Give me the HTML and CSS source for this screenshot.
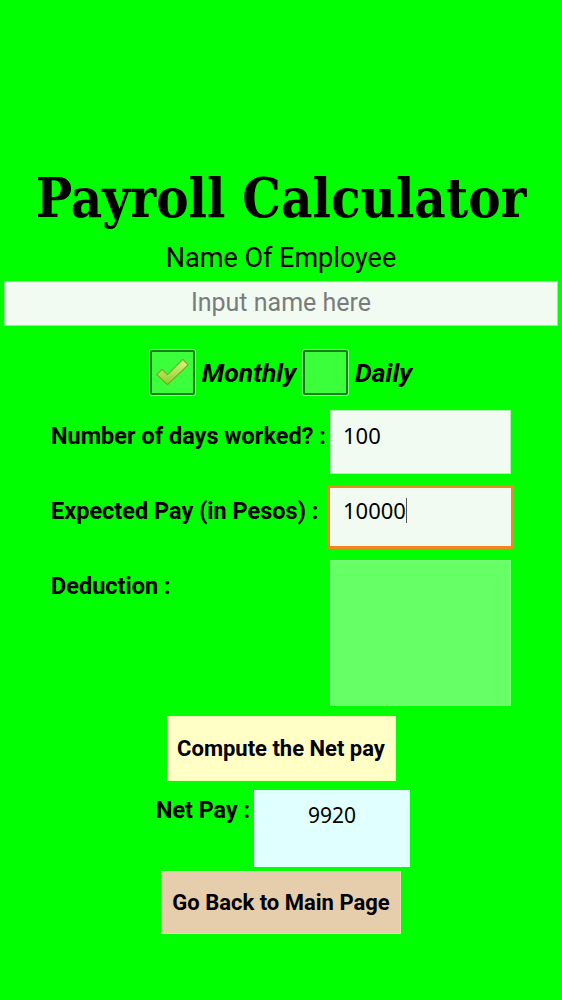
FILE: index.html
```html
<!DOCTYPE html>
<html lang="en">
<head>
<meta charset="utf-8">
<title>Payroll Calculator</title>
<link rel="stylesheet" href="styles.css">
</head>
<body>
<div class="screen">
  <h1 class="title">Payroll Calculator</h1>
  <p class="name-label">Name Of Employee</p>
  <div class="name-input">Input name here</div>
  <div class="choices">
    <span class="check">
      <svg viewBox="0 0 40 40" width="36" height="36">
        <defs>
          <linearGradient id="ck" x1="0" y1="0" x2="0" y2="1">
            <stop offset="0" stop-color="#dcf77e"/>
            <stop offset="1" stop-color="#8ccc2c"/>
          </linearGradient>
        </defs>
        <path d="M3 23 L9 17 L15 23 L32 6 L38 12 L15 34 Z" fill="url(#ck)" stroke="#6ea82c" stroke-width="1.2" stroke-linejoin="round"/>
      </svg>
    </span>
    <span class="choice-label">Monthly</span>
    <span class="check"></span>
    <span class="choice-label">Daily</span>
  </div>
  <div class="form">
    <div class="label">Number of days worked? :</div>
    <div class="field">100</div>
    <div class="label">Expected Pay (in Pesos) :</div>
    <div class="field focused">10000<span class="caret"></span></div>
    <div class="label">Deduction :</div>
    <div class="field deduction"></div>
  </div>
  <div class="actions">
    <div class="btn compute">Compute the Net pay</div>
    <div class="net-row">
      <span class="net-label">Net Pay :</span>
      <div class="net-box">9920</div>
    </div>
    <div class="btn back">Go Back to Main Page</div>
  </div>
</div>
</body>
</html>
```
FILE: styles.css
```css
body {
  margin: 0;
  background: #00ff00;
  font-family: Roboto, "Noto Sans", sans-serif;
  color: #000;
}

.screen {
  width: 562px;
  min-height: 1000px;
  padding-top: 166px;
  box-sizing: border-box;
}

.title {
  margin: 0;
  text-align: center;
  font-family: "DejaVu Serif", serif;
  font-stretch: condensed;
  font-weight: bold;
  font-size: 54px;
  line-height: 64px;
}

.name-label {
  margin: 12px 0 7px;
  text-align: center;
  font-size: 27px;
  line-height: 32px;
}

.name-input {
  margin: 0 4px;
  height: 45px;
  box-sizing: border-box;
  border: 1px solid #9be89b;
  background: #f1fbf1;
  color: #7b7b7b;
  font-size: 25px;
  line-height: 41px;
  text-align: center;
}

.choices {
  display: flex;
  justify-content: center;
  align-items: center;
  gap: 7px;
  margin-top: 23px;
  height: 46px;
}

.check {
  width: 45px;
  height: 45px;
  box-sizing: border-box;
  border: 2px solid #1d7a1d;
  background: #3aff3a;
  box-shadow: 0 0 0 1px #7dff7d;
  border-radius: 2px;
  display: flex;
  align-items: center;
  justify-content: center;
}

.choice-label {
  font-weight: bold;
  font-style: italic;
  font-size: 26.5px;
}

.form {
  display: grid;
  grid-template-columns: 279px 181px;
  grid-template-rows: 64px 64px 146px;
  row-gap: 11px;
  margin: 15px 0 0 51px;
}

.label {
  font-weight: bold;
  font-size: 23.5px;
  line-height: 26px;
  padding-top: 13px;
  white-space: nowrap;
}

.field {
  box-sizing: border-box;
  background: #f1fbf1;
  border: 1px solid #b5ecb5;
  font-family: "Noto Sans", sans-serif;
  font-size: 22px;
  line-height: 26px;
  padding: 11px 12px;
}

.field.focused {
  border: 3px solid #f0861c;
  border-radius: 2px;
  margin: 0 -3px;
  padding: 9px 13px;
}

.caret {
  display: inline-block;
  width: 1px;
  height: 25px;
  background: #555;
  vertical-align: -4px;
}

.field.deduction {
  background: #66ff66;
  border-color: #7cff7c;
}

.actions {
  display: flex;
  flex-direction: column;
  align-items: center;
  margin-top: 10px;
}

.btn {
  display: flex;
  align-items: center;
  justify-content: center;
  font-weight: bold;
  font-size: 22px;
  box-sizing: border-box;
}

.compute {
  width: 229px;
  height: 65px;
  background: #ffffc6;
  border: 1px solid #f0ffb0;
}

.net-row {
  display: flex;
  align-items: flex-start;
  gap: 4px;
  margin-top: 9px;
  padding-left: 4px;
}

.net-label {
  font-weight: bold;
  font-size: 23.3px;
  line-height: 26px;
  padding-top: 7px;
}

.net-box {
  width: 156px;
  height: 77px;
  box-sizing: border-box;
  background: #e0ffff;
  font-family: "Noto Sans", sans-serif;
  font-size: 21px;
  line-height: 26px;
  text-align: center;
  padding-top: 12px;
}

.back {
  width: 240px;
  height: 63px;
  margin-top: 4px;
  background: #e6cdac;
  border: 1px solid #eed8b8;
}
```
